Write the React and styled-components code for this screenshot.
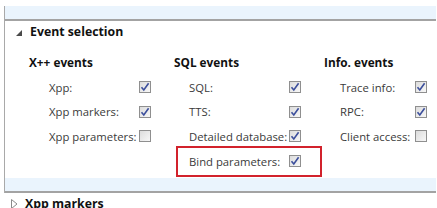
import styled, { createGlobalStyle } from 'styled-components';

const GlobalStyle = createGlobalStyle`
    html, body {
        margin: 0;
        padding: 0;
        background: #ffffff;
        overflow: hidden;
    }
    body {
        font-family: "Open Sans", "Noto Sans", sans-serif;
        color: #2b2b2b;
    }
`;

const groups = [
    {
        title: 'X++ events',
        indent: 20,
        labelWidth: 90,
        items: [
            { label: 'Xpp:', checked: true },
            { label: 'Xpp markers:', checked: true },
            { label: 'Xpp parameters:', checked: false },
        ],
    },
    {
        title: 'SQL events',
        indent: 15,
        labelWidth: 100,
        items: [
            { label: 'SQL:', checked: true },
            { label: 'TTS:', checked: true },
            { label: 'Detailed database:', checked: true },
            { label: 'Bind parameters:', checked: true, highlight: true },
        ],
    },
    {
        title: 'Info. events',
        indent: 16,
        labelWidth: 75,
        items: [
            { label: 'Trace info:', checked: true },
            { label: 'RPC:', checked: true },
            { label: 'Client access:', checked: false },
        ],
    },
];

const Check = ({ checked }) => (
    <Box>
        {checked && (
            <svg width="10" height="10" viewBox="0 0 10 10">
                <path d="M1.5 5.2 L3.8 8 L8.6 1.2" fill="none" stroke="#3c4f9c" strokeWidth="1.6" />
            </svg>
        )}
    </Box>
);

const ExpandedIcon = () => (
    <svg width="6" height="6" viewBox="0 0 6 6">
        <polygon points="6,0 6,6 0,6" fill="#4a4a4a" />
    </svg>
);

const CollapsedIcon = () => (
    <svg width="7" height="10" viewBox="0 0 7 10">
        <polygon points="0.5,0.5 6,5 0.5,9.5" fill="none" stroke="#8a8a8a" strokeWidth="1" />
    </svg>
);

const App = () => {
    return (
        <>
            <GlobalStyle />
            <Page>
                <Panel>
                    <Band />
                    <SectionHeader>
                        <IconSlot><ExpandedIcon /></IconSlot>
                        <SectionTitle>Event selection</SectionTitle>
                    </SectionHeader>
                    <Columns>
                        {groups.map((g) => (
                            <Group key={g.title}>
                                <GroupTitle>{g.title}</GroupTitle>
                                {g.items.map((item) => (
                                    <Row key={item.label} $indent={g.indent} $highlight={item.highlight}>
                                        <Label $width={g.labelWidth}>{item.label}</Label>
                                        <Check checked={item.checked} />
                                    </Row>
                                ))}
                            </Group>
                        ))}
                    </Columns>
                    <Band $bottom />
                </Panel>
                <SectionHeader>
                    <IconSlot $collapsed><CollapsedIcon /></IconSlot>
                    <SectionTitle>Xpp markers</SectionTitle>
                </SectionHeader>
            </Page>
        </>
    );
};

export default App;

const Page = styled.div`
    width: 437px;
    height: 208px;
    padding-top: 6px;
    box-sizing: border-box;
`;

const Panel = styled.div`
    margin-left: 4px;
    border-left: 1px solid #a9a9a9;
`;

const Band = styled.div`
    height: 13px;
    margin-top: ${(p) => (p.$bottom ? '5px' : '0')};
    margin-right: 1px;
    background: #eaf4fd;
    border-bottom: 2px solid #a3a3a3;
`;

const SectionHeader = styled.div`
    display: flex;
    align-items: center;
    height: 20px;
    padding-left: 11px;
`;

const IconSlot = styled.div`
    width: 14px;
    display: flex;
    align-items: center;
    padding-top: ${(p) => (p.$collapsed ? '2px' : '4px')};
`;

const SectionTitle = styled.div`
    font-weight: 700;
    font-size: 12.3px;
    color: #111;
`;

const Columns = styled.div`
    display: grid;
    grid-template-columns: 145px 150px 110px;
    padding-left: 24px;
    padding-top: 11px;
`;

const Group = styled.div`
    display: flex;
    flex-direction: column;
`;

const GroupTitle = styled.div`
    font-weight: 700;
    font-size: 11.8px;
    color: #111;
    height: 20px;
    line-height: 20px;
    margin-bottom: 3px;
`;

const Row = styled.div`
    position: relative;
    display: flex;
    align-items: center;
    height: 24.6px;
    padding-left: ${(p) => p.$indent}px;

    ${(p) => p.$highlight && `
        &::after {
            content: '';
            position: absolute;
            left: 2px;
            top: -3px;
            width: 146px;
            height: 31px;
            box-sizing: border-box;
            border: 2.5px solid #d2222c;
        }
    `}
`;

const Label = styled.div`
    width: ${(p) => p.$width}px;
    font-size: 11.3px;
    color: #3a3a3a;
    white-space: nowrap;
`;

const Box = styled.div`
    width: 12px;
    height: 12px;
    box-sizing: border-box;
    border: 1px solid #8f8f8f;
    background: linear-gradient(135deg, #dcdcdc, #f7f7f7);
    display: flex;
    align-items: center;
    justify-content: center;
`;
